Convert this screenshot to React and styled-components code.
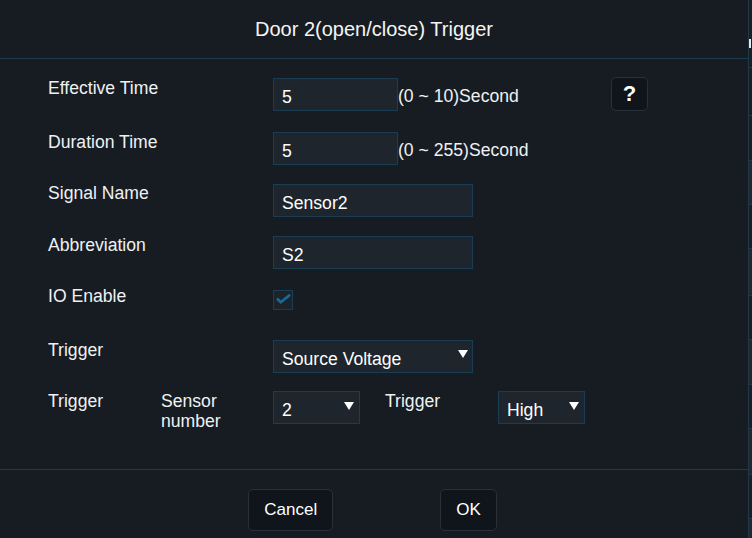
import React from "react";
import styled, { createGlobalStyle } from "styled-components";

const GlobalStyle = createGlobalStyle`
  html, body {
    margin: 0;
    padding: 0;
    background: #171c22;
  }
  body {
    font-family: "Liberation Sans", Arial, sans-serif;
  }
`;

const Page = styled.div`
  display: flex;
  width: 752px;
  height: 538px;
  overflow: hidden;
  background: #171c22;
`;

const Dialog = styled.div`
  flex: none;
  width: 749px;
  height: 538px;
  box-sizing: border-box;
  border-right: 1px solid #1c3a4d;
  display: flex;
  flex-direction: column;
  color: #eef1f3;
`;

const Header = styled.div`
  flex: none;
  height: 58px;
  border-bottom: 1px solid #1c3a4d;
  display: flex;
  align-items: center;
  justify-content: center;
  font-size: 20px;
  color: #f3f5f6;
`;

const Body = styled.div`
  flex: 1;
  padding: 18px 0 0 48px;
  font-size: 17.6px;
`;

const Row = styled.div`
  display: flex;
  align-items: flex-start;
  height: ${(p) => p.$h}px;
`;

const Label = styled.div`
  flex: none;
  width: ${(p) => p.$w || 225}px;
  margin-left: ${(p) => p.$ml || 0}px;
  margin-top: 1px;
  line-height: 20px;
  color: #eef1f3;
`;

const Controls = styled.div`
  display: flex;
  align-items: flex-start;
  margin-top: ${(p) => p.$mt ?? 1}px;
`;

const TextInput = styled.input`
  width: ${(p) => p.$w}px;
  height: 33px;
  box-sizing: border-box;
  border: 1px solid #1b3d53;
  background: #1e252c;
  color: #ffffff;
  font-family: "Liberation Sans", Arial, sans-serif;
  font-size: 17.6px;
  padding: 6px 8px 0;
  margin: 0;
  outline: none;
  border-radius: 0;
`;

const Unit = styled.div`
  flex: none;
  width: 213px;
  padding-top: 8px;
  line-height: 20px;
  color: #eef1f3;
`;

const HelpButton = styled.button`
  width: 37px;
  height: 34px;
  margin-top: -1px;
  box-sizing: border-box;
  border: 1px solid #283038;
  border-radius: 5px;
  background: #0f151a;
  color: #ffffff;
  font-family: "Liberation Sans", Arial, sans-serif;
  font-weight: bold;
  font-size: 22px;
  padding: 0;
  display: flex;
  align-items: center;
  justify-content: center;
`;

const Check = styled.div`
  width: 20px;
  height: 20px;
  box-sizing: border-box;
  border: 1px solid #1b3d53;
  background: #1c232a;
  display: flex;
  align-items: center;
  justify-content: center;
`;

const Select = styled.div`
  width: ${(p) => p.$w}px;
  height: 33px;
  box-sizing: border-box;
  border: 1px solid #1b3d53;
  background: #1e252c;
  color: #ffffff;
  padding: 8px ${(p) => p.$pr || 4}px 0 8px;
  display: flex;
  align-items: flex-start;
  justify-content: space-between;
  line-height: 20px;
`;

const Arrow = styled.svg`
  flex: none;
  margin-top: ${(p) => p.$mt || 1}px;
`;

const Footer = styled.div`
  flex: none;
  height: 69px;
  border-top: 1px solid #1c3a4d;
  display: flex;
  justify-content: center;
  align-items: flex-start;
  gap: 107px;
  padding-top: 19px;
  padding-right: 3px;
  box-sizing: border-box;
`;

const Button = styled.button`
  height: 42px;
  box-sizing: border-box;
  padding: 0 15px;
  border: 1px solid #283038;
  border-radius: 5px;
  background: #0f151a;
  color: #ffffff;
  font-family: "Liberation Sans", Arial, sans-serif;
  font-size: 17px;
`;

const Strip = styled.div`
  flex: 1;
  display: flex;
  flex-direction: column;
`;

const StripRow = styled.div`
  flex: none;
  height: ${(p) => p.$h}px;
  box-sizing: border-box;
  border-top: ${(p) => (p.$first ? "none" : "1px solid #1c3a4d")};
  background: ${(p) => (p.$alt ? "#24282c" : "#1a1f24")};
  padding-top: ${(p) => (p.$first ? 39 : 0)}px;
`;

const Caret = styled.div`
  width: 2px;
  height: 9px;
  background: #e8e8e8;
`;

const DownArrow = ({ mt }) => (
  <Arrow $mt={mt} width="10" height="8" viewBox="0 0 10 8">
    <polygon points="0,0 10,0 5,8" fill="#ffffff" />
  </Arrow>
);

const stripRows = [
  { h: 67, first: true },
  { h: 48 },
  { h: 45 },
  { h: 44, alt: true },
  { h: 44 },
  { h: 47, alt: true },
  { h: 44 },
  { h: 45, alt: true },
  { h: 44 },
  { h: 46, alt: true },
  { h: 44 },
  { h: 20, alt: true },
];

export default function App() {
  return (
    <>
      <GlobalStyle />
      <Page>
        <Dialog>
          <Header>Door 2(open/close) Trigger</Header>
          <Body>
            <Row $h={54}>
              <Label>Effective Time</Label>
              <Controls>
                <TextInput $w={125} value="5" readOnly />
                <Unit>(0 ~ 10)Second</Unit>
                <HelpButton>?</HelpButton>
              </Controls>
            </Row>
            <Row $h={51}>
              <Label>Duration Time</Label>
              <Controls>
                <TextInput $w={125} value="5" readOnly />
                <Unit>(0 ~ 255)Second</Unit>
              </Controls>
            </Row>
            <Row $h={52}>
              <Label>Signal Name</Label>
              <Controls $mt={2}>
                <TextInput $w={200} value="Sensor2" readOnly />
              </Controls>
            </Row>
            <Row $h={51}>
              <Label>Abbreviation</Label>
              <Controls $mt={2}>
                <TextInput $w={200} value="S2" readOnly />
              </Controls>
            </Row>
            <Row $h={54}>
              <Label>IO Enable</Label>
              <Controls $mt={5}>
                <Check>
                  <svg width="18" height="18" viewBox="0 0 18 18">
                    <path
                      d="M3 7.5 L6.8 11.2 L16 3.8"
                      fill="none"
                      stroke="#1a6a9c"
                      strokeWidth="2.6"
                    />
                  </svg>
                </Check>
              </Controls>
            </Row>
            <Row $h={51}>
              <Label>Trigger</Label>
              <Controls>
                <Select $w={200}>
                  <span>Source Voltage</span>
                  <DownArrow mt={1} />
                </Select>
              </Controls>
            </Row>
            <Row $h={40}>
              <Label $w={113}>Trigger</Label>
              <Label $w={112}>Sensor number</Label>
              <Controls>
                <Select $w={87} $pr={5}>
                  <span>2</span>
                  <DownArrow mt={2} />
                </Select>
              </Controls>
              <Label $w={113} $ml={25}>
                Trigger
              </Label>
              <Controls>
                <Select $w={87} $pr={5}>
                  <span>High</span>
                  <DownArrow mt={2} />
                </Select>
              </Controls>
            </Row>
          </Body>
          <Footer>
            <Button>Cancel</Button>
            <Button>OK</Button>
          </Footer>
        </Dialog>
        <Strip>
          {stripRows.map((r, i) => (
            <StripRow key={i} $h={r.h} $alt={r.alt} $first={r.first}>
              {r.first && <Caret />}
            </StripRow>
          ))}
        </Strip>
      </Page>
    </>
  );
}
